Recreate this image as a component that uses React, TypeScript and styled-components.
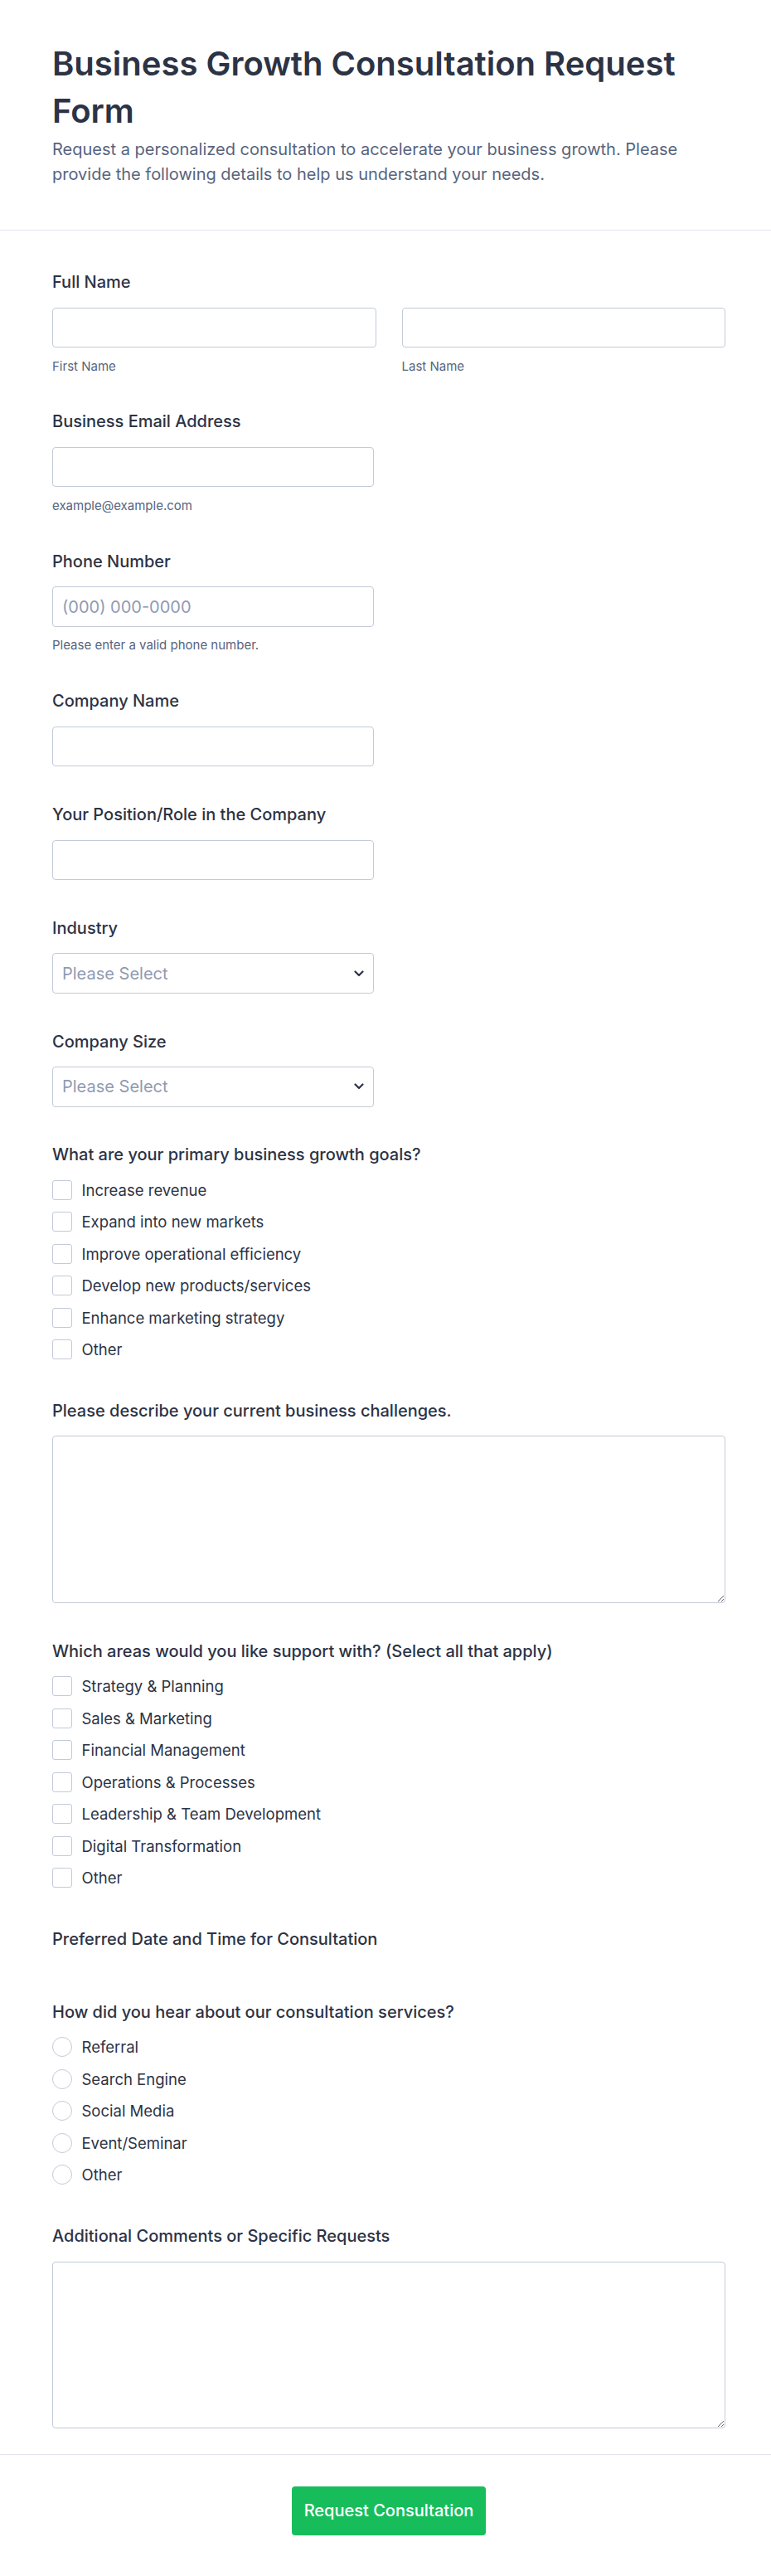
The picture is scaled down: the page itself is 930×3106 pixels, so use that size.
import React from 'react';
import styled, { createGlobalStyle } from 'styled-components';

const GlobalStyle = createGlobalStyle`
  * {
    box-sizing: border-box;
  }
  body {
    margin: 0;
    background: #ffffff;
    font-family: Inter, "Noto Sans", sans-serif;
    color: #2c3345;
  }
`;

const Page = styled.div`
  width: 930px;
  background: #ffffff;
`;

const Header = styled.header`
  padding: 48px 55px 52px 63px;
  border-bottom: 1px solid #e2e4ec;
`;

const Title = styled.h1`
  margin: 0;
  font-size: 40px;
  line-height: 57px;
  font-weight: 600;
  color: #2c3345;
`;

const Description = styled.p`
  margin: 3px 0 0;
  font-size: 20px;
  line-height: 30px;
  color: #57647e;
`;

const Form = styled.form`
  display: flex;
  flex-direction: column;
  gap: 44.7px;
  padding: 49px 55px 30.5px 63px;
`;

const Field = styled.div`
  display: flex;
  flex-direction: column;
`;

const Label = styled.div`
  font-size: 20px;
  line-height: 27px;
  font-weight: 500;
  color: #2c3345;
  margin-bottom: 16.5px;
`;

const NameRow = styled.div`
  display: grid;
  grid-template-columns: 1fr 1fr;
  column-gap: 31px;
`;

const Cell = styled.div`
  display: flex;
  flex-direction: column;
`;

const TextInput = styled.input<{ $width?: number }>`
  width: ${p => (p.$width ? `${p.$width}px` : '100%')};
  height: 48.5px;
  padding: 0 11px;
  border: 1px solid #c3cad8;
  border-radius: 4px;
  background: #ffffff;
  font-family: Inter, sans-serif;
  font-size: 20px;
  color: #2c3345;
  outline: none;

  &::placeholder {
    color: #8f9bb3;
  }
`;

const SubLabel = styled.div`
  margin-top: 13.5px;
  font-size: 15px;
  line-height: 18.3px;
  color: #57647e;
`;

const SelectWrap = styled.div`
  position: relative;
  width: 388px;
`;

const Select = styled.select`
  appearance: none;
  width: 100%;
  height: 48.5px;
  padding: 0 40px 0 11px;
  border: 1px solid #c3cad8;
  border-radius: 4px;
  background: #ffffff;
  font-family: Inter, sans-serif;
  font-size: 20px;
  color: #8f9bb3;
  outline: none;
`;

const Chevron = styled.svg`
  position: absolute;
  right: 12px;
  top: 50%;
  transform: translateY(-50%);
  pointer-events: none;
`;

const OptionList = styled.div`
  display: flex;
  flex-direction: column;
  gap: 14.5px;
  padding-bottom: 4px;
`;

const Option = styled.label`
  display: flex;
  align-items: center;
  gap: 11.5px;
  font-size: 18.5px;
  line-height: 24px;
  color: #2c3345;
`;

const Mark = styled.span<{ $round?: boolean }>`
  flex: none;
  width: 24px;
  height: 24px;
  border: 1px solid #c3cad8;
  border-radius: ${p => (p.$round ? '50%' : '3px')};
  background: #ffffff;
`;

const TextArea = styled.textarea`
  width: 100%;
  height: 201.5px;
  padding: 10px 11px;
  border: 1px solid #c3cad8;
  border-radius: 4px;
  font-family: Inter, sans-serif;
  font-size: 18px;
  color: #2c3345;
  outline: none;
`;

const Footer = styled.footer`
  display: flex;
  justify-content: center;
  padding: 38px 55px 49px 63px;
  border-top: 1px solid #e2e4ec;
`;

const SubmitButton = styled.button`
  height: 59px;
  padding: 0 15px;
  border: none;
  border-radius: 4px;
  background: #18bd5b;
  color: #ffffff;
  font-family: Inter, sans-serif;
  font-size: 20px;
  font-weight: 500;
  cursor: pointer;
`;

const goals = [
  'Increase revenue',
  'Expand into new markets',
  'Improve operational efficiency',
  'Develop new products/services',
  'Enhance marketing strategy',
  'Other',
];

const areas = [
  'Strategy & Planning',
  'Sales & Marketing',
  'Financial Management',
  'Operations & Processes',
  'Leadership & Team Development',
  'Digital Transformation',
  'Other',
];

const sources = ['Referral', 'Search Engine', 'Social Media', 'Event/Seminar', 'Other'];

function Dropdown() {
  return (
    <SelectWrap>
      <Select defaultValue="">
        <option value="">Please Select</option>
      </Select>
      <Chevron width="12" height="8" viewBox="0 0 12 8">
        <path d="M1.5 1.5 L6 6 L10.5 1.5" fill="none" stroke="#2c3345" strokeWidth="2.2" strokeLinecap="round" strokeLinejoin="round" />
      </Chevron>
    </SelectWrap>
  );
}

function Choices({ items, round }: { items: string[]; round?: boolean }) {
  return (
    <OptionList>
      {items.map(item => (
        <Option key={item}>
          <Mark $round={round} />
          {item}
        </Option>
      ))}
    </OptionList>
  );
}

export default function App() {
  return (
    <Page>
      <GlobalStyle />
      <Header>
        <Title>Business Growth Consultation Request Form</Title>
        <Description>
          Request a personalized consultation to accelerate your business growth. Please provide the following details to help us understand your needs.
        </Description>
      </Header>
      <Form onSubmit={e => e.preventDefault()}>
        <Field>
          <Label>Full Name</Label>
          <NameRow>
            <Cell>
              <TextInput />
              <SubLabel>First Name</SubLabel>
            </Cell>
            <Cell>
              <TextInput />
              <SubLabel>Last Name</SubLabel>
            </Cell>
          </NameRow>
        </Field>
        <Field>
          <Label>Business Email Address</Label>
          <TextInput $width={388} />
          <SubLabel>example@example.com</SubLabel>
        </Field>
        <Field>
          <Label>Phone Number</Label>
          <TextInput $width={388} placeholder="(000) 000-0000" />
          <SubLabel>Please enter a valid phone number.</SubLabel>
        </Field>
        <Field>
          <Label>Company Name</Label>
          <TextInput $width={388} />
        </Field>
        <Field>
          <Label>Your Position/Role in the Company</Label>
          <TextInput $width={388} />
        </Field>
        <Field>
          <Label>Industry</Label>
          <Dropdown />
        </Field>
        <Field>
          <Label>Company Size</Label>
          <Dropdown />
        </Field>
        <Field>
          <Label>What are your primary business growth goals?</Label>
          <Choices items={goals} />
        </Field>
        <Field>
          <Label>Please describe your current business challenges.</Label>
          <TextArea />
        </Field>
        <Field>
          <Label>Which areas would you like support with? (Select all that apply)</Label>
          <Choices items={areas} />
        </Field>
        <Field>
          <Label>Preferred Date and Time for Consultation</Label>
        </Field>
        <Field>
          <Label>How did you hear about our consultation services?</Label>
          <Choices items={sources} round />
        </Field>
        <Field>
          <Label>Additional Comments or Specific Requests</Label>
          <TextArea />
        </Field>
      </Form>
      <Footer>
        <SubmitButton type="submit">Request Consultation</SubmitButton>
      </Footer>
    </Page>
  );
}
